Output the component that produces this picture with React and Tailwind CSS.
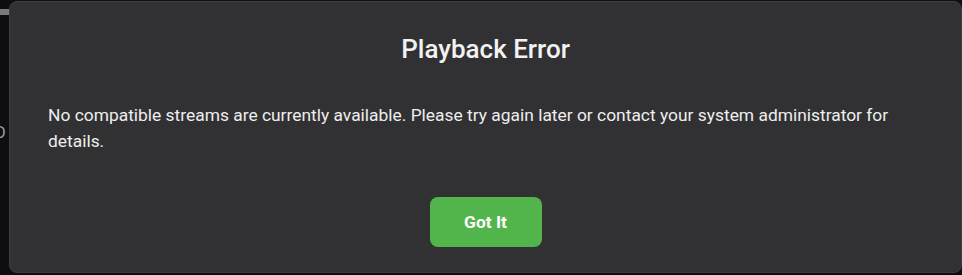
export default function App() {
  return (
    <div className="relative w-[962px] h-[275px] overflow-hidden bg-[#0e0e12]" style={{ fontFamily: 'Roboto, "Noto Sans", sans-serif' }}>
      {/* page behind the dialog */}
      <div className="absolute left-0 top-[9px] w-[10px] h-[6px] bg-[#7a7a7c]" />
      <div className="absolute left-[-6px] top-[120px] text-[17px] text-[#9a9a9c]">O</div>

      {/* dialog */}
      <div className="absolute left-[9px] top-[1px] w-[953px] h-[272px] rounded-[8px] border border-[#3e3e40] bg-[#313133] flex flex-col px-[38px] pt-[31px]">
        <h1 className="text-center text-[26px] font-medium leading-[32px] text-[#f2f2f2]">Playback Error</h1>
        <p className="mt-[37px] text-[17.4px] leading-[26px] text-[#eeeeee]">
          No compatible streams are currently available. Please try again later or contact your system administrator for details.
        </p>
        <div className="mt-[43px] flex justify-center">
          <button className="w-[112px] h-[50px] rounded-[8px] bg-[#52b54b] text-[17.4px] font-bold text-white">Got It</button>
        </div>
      </div>
    </div>
  );
}
